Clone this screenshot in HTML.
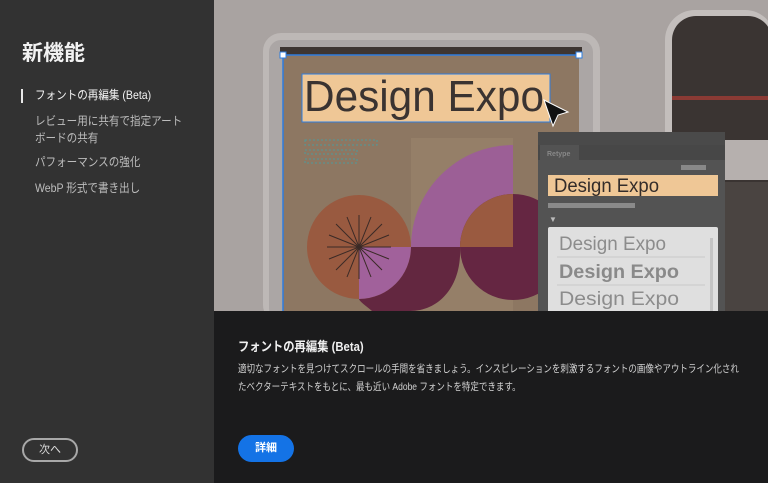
<!DOCTYPE html>
<html><head><meta charset="utf-8"><style>
*{margin:0;padding:0;box-sizing:border-box}
body{width:768px;height:483px;overflow:hidden;background:#1b1b1c;font-family:"Liberation Sans","Noto Sans CJK JP",sans-serif;position:relative}
.side{position:absolute;left:0;top:0;width:214px;height:483px;background:#323232}
.t{position:absolute;left:22px;top:37px;font-size:21px;font-weight:bold;color:#f2f2f2}
.it{position:absolute;left:35px;font-size:12px;color:#bdbdbd;line-height:17px;white-space:nowrap;transform:scaleX(0.88);transform-origin:left top}
.bar{position:absolute;left:21px;top:89px;width:2px;height:14px;background:#e8e8e8}
.nb{position:absolute;left:22px;top:438px;width:56px;height:24px;border:2px solid #a8a8a8;border-radius:12px;color:#ddd;font-size:11px;text-align:center;line-height:20px}
.bot{position:absolute;left:214px;top:311px;width:554px;height:172px;background:#1b1b1c;overflow:hidden}
.bt{position:absolute;left:24px;top:25px;font-size:13px;font-weight:bold;color:#f0f0f0;white-space:nowrap;transform:scaleX(0.87);transform-origin:left top}
.bd{position:absolute;left:24px;top:50px;font-size:10.5px;color:#d2d2d2;line-height:17.5px;white-space:nowrap;transform:scaleX(0.81);transform-origin:left top}
.bb{position:absolute;left:24px;top:124px;width:56px;height:27px;background:#1473e6;border-radius:14px;color:#fff;font-size:11px;font-weight:bold;text-align:center;line-height:27px}
</style></head><body>
<div class="side">
<div class="t">新機能</div>
<div class="bar"></div>
<div class="it" style="top:87px;color:#f4f4f4">フォントの再編集 (Beta)</div>
<div class="it" style="top:113px">レビュー用に共有で指定アート<br>ボードの共有</div>
<div class="it" style="top:154px">パフォーマンスの強化</div>
<div class="it" style="top:180px">WebP 形式で書き出し</div>
<div class="nb">次へ</div>
</div>
<svg style="position:absolute;left:214px;top:0" width="554" height="311" viewBox="214 0 554 311" font-family="Liberation Sans, sans-serif">
<rect x="214" y="0" width="554" height="311" fill="#a9a3a1"/>
<rect x="263" y="33" width="337" height="290" rx="18" fill="#bdb8b6"/>
<rect x="269" y="40" width="324" height="280" rx="12" fill="#aba6a5"/>
<rect x="665" y="10" width="110" height="320" rx="30" fill="#c3bebc"/>
<rect x="672" y="16" width="100" height="310" rx="24" fill="#3a3432"/>
<rect x="672" y="96" width="100" height="4" fill="#8a3a34"/>
<rect x="672" y="140" width="100" height="40" fill="#b6b0ae"/>
<rect x="672" y="182" width="100" height="130" fill="#4a4441"/>
<rect x="280" y="47" width="302" height="8" fill="#3e3632"/>
<rect x="283" y="55" width="296" height="256" fill="#8d7762"/>
<rect x="411" y="138" width="102" height="173" fill="#957f68"/>
<circle cx="359" cy="247" r="52" fill="#995a40"/>
<path d="M359 247 L411 247 A52 52 0 0 1 359 299 Z" fill="#a1619b"/>
<path d="M513 247 L411 247 A102 102 0 0 1 513 145 Z" fill="#9c5f96"/>
<path d="M411 247 L460 247 C 462 285 440 311 410 311 L372 311 C 365 305 360 302 359 299 A52 52 0 0 0 411 247 Z" fill="#632740"/>
<circle cx="513" cy="247" r="53" fill="#652642"/>
<path d="M460 247 A53 53 0 0 1 513 194 L513 247 Z" fill="#9a5a40"/>
<g stroke="#3a2a26" stroke-width="1">
<line x1="327" y1="247" x2="391" y2="247"/><line x1="359" y1="215" x2="359" y2="279"/>
<line x1="336" y1="224" x2="382" y2="270"/><line x1="336" y1="270" x2="382" y2="224"/>
<line x1="347" y1="217" x2="371" y2="277"/><line x1="371" y1="217" x2="347" y2="277"/>
<line x1="329" y1="235" x2="389" y2="259"/><line x1="329" y1="259" x2="389" y2="235"/>
</g>
<g stroke="#4f9a9a" stroke-width="1" stroke-dasharray="2 2" fill="none">
<rect x="305" y="140" width="72" height="5"/><rect x="305" y="150" width="52" height="4"/><rect x="305" y="159" width="52" height="4"/>
</g>
<line x1="283" y1="55" x2="283" y2="311" stroke="#2e7de0" stroke-width="1.5"/>
<line x1="283" y1="55" x2="579" y2="55" stroke="#2e7de0" stroke-width="1.5"/>
<rect x="280" y="52" width="6" height="6" fill="#fff" stroke="#2e7de0"/>
<rect x="576" y="52" width="6" height="6" fill="#fff" stroke="#2e7de0"/>
<rect x="302" y="74" width="248" height="48" fill="#efc796" stroke="#2e7de0" stroke-width="1"/>
<text x="304" y="111" font-size="44" fill="#3a3331" textLength="240" lengthAdjust="spacingAndGlyphs">Design Expo</text>
<path d="M544 100 L568 112 L558 115 L553 126 Z" fill="#111" stroke="#fff" stroke-width="1"/>
<rect x="538" y="132" width="187" height="180" fill="#535353"/>
<rect x="538" y="132" width="187" height="13" fill="#4a4a4a"/>
<rect x="538" y="145" width="187" height="15" fill="#474747"/>
<rect x="540" y="145" width="39" height="15" fill="#535353"/>
<text x="547" y="156" font-size="7" fill="#888" font-weight="bold">Retype</text>
<rect x="681" y="165" width="25" height="5" fill="#888"/>
<rect x="548" y="175" width="170" height="21" fill="#efc796"/>
<text x="554" y="192" font-size="19" fill="#332c2a" textLength="105" lengthAdjust="spacingAndGlyphs">Design Expo</text>
<rect x="548" y="203" width="87" height="5" fill="#8a8a8a"/>
<text x="549" y="222" font-size="8" fill="#bbb">▼</text>
<rect x="548" y="227" width="170" height="90" rx="2" fill="#dfdfdf"/>
<text x="559" y="250" font-size="19" fill="#8c8c8c" textLength="107" lengthAdjust="spacingAndGlyphs">Design Expo</text>
<line x1="557" y1="257" x2="705" y2="257" stroke="#c8c8c8"/>
<text x="559" y="278" font-size="19" fill="#8a8a8a" font-weight="bold" textLength="120" lengthAdjust="spacingAndGlyphs">Design Expo</text>
<line x1="557" y1="285" x2="705" y2="285" stroke="#c8c8c8"/>
<text x="559" y="305" font-size="19" fill="#8c8c8c" textLength="120" lengthAdjust="spacingAndGlyphs">Design Expo</text>
<rect x="710" y="238" width="3" height="75" fill="#c4c4c4"/>
</svg>
<div class="bot">
<div class="bt">フォントの再編集 (Beta)</div>
<div class="bd">適切なフォントを見つけてスクロールの手間を省きましょう。インスピレーションを刺激するフォントの画像やアウトライン化され<br>たベクターテキストをもとに、最も近い Adobe フォントを特定できます。</div>
<div class="bb">詳細</div>
</div>
</body></html>
